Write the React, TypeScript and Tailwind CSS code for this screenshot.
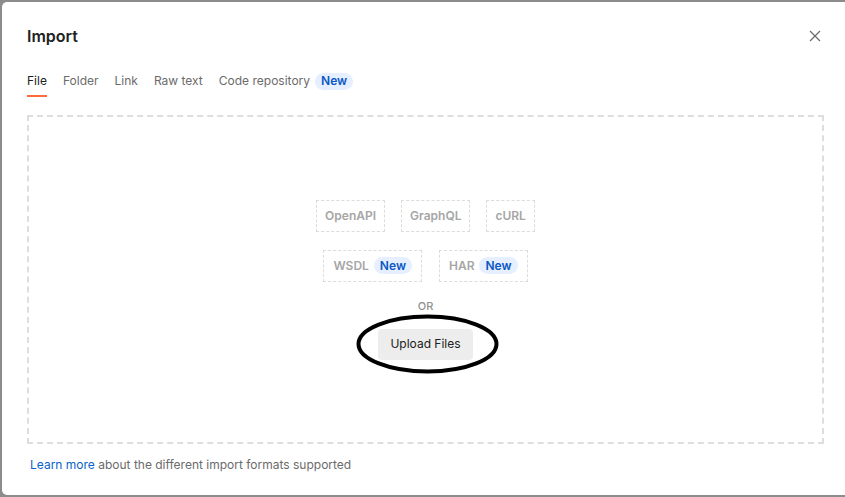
import React from "react";

const font = { fontFamily: "Inter, 'Noto Sans', sans-serif" };

function Badge() {
  return (
    <span className="ml-[5px] inline-flex h-[17px] items-center rounded-full bg-[#e6efff] px-[6px] text-[12px] font-semibold leading-none text-[#0a58c4]">
      New
    </span>
  );
}

function Tile({ label, badge }: { label: string; badge?: boolean }) {
  return (
    <div
      className={
        badge
          ? "flex h-[32px] items-center border border-dashed border-[#dcdcdc] px-[9px] text-[12px] font-semibold text-[#a6a6a6]"
          : "flex h-[32px] items-center border border-dashed border-[#dcdcdc] px-[8px] text-[12px] font-semibold text-[#a6a6a6]"
      }
    >
      {label}
      {badge && <Badge />}
    </div>
  );
}

export default function App() {
  return (
    <div className="h-[497px] w-[845px] overflow-hidden bg-[#8c8c8c]" style={font}>
      <div className="ml-[2px] mt-[2px] flex h-[493px] w-[860px] flex-col rounded-[5px] bg-white pl-[25px] pr-[40px] pt-[22px]">
        <div className="flex h-[24px] w-[796px] items-center justify-between">
          <div className="text-[16px] font-semibold text-[#212121]">Import</div>
          <svg width="12" height="12" viewBox="0 0 12 12" className="mr-[2px]">
            <path d="M1 1 L11 11 M11 1 L1 11" stroke="#6b6b6b" strokeWidth="1.2" />
          </svg>
        </div>
        <div className="mt-[23px] flex items-start gap-[16px] text-[12px] text-[#6b6b6b]">
          <div className="flex flex-col items-start">
            <span className="leading-[20px] text-[#212121]">File</span>
            <span className="mt-[4px] h-[2px] w-[20px] bg-[#ff6c37]" />
          </div>
          <span className="leading-[20px]">Folder</span>
          <span className="leading-[20px]">Link</span>
          <span className="leading-[20px]">Raw text</span>
          <span className="flex items-center leading-[20px]">
            Code repository
            <Badge />
          </span>
        </div>
        <div className="mt-[18px] flex h-[329px] w-[797px] flex-col items-center justify-center border-2 border-dashed border-[#dedede]">
          <div className="flex gap-[16px]">
            <Tile label="OpenAPI" />
            <Tile label="GraphQL" />
            <Tile label="cURL" />
          </div>
          <div className="mt-[18px] flex gap-[17px]">
            <Tile label="WSDL" badge />
            <Tile label="HAR" badge />
          </div>
          <div className="mt-[16px] text-[11px] font-medium leading-[16px] text-[#8f8f8f]">OR</div>
          <div className="relative mt-[15px]">
            <div className="flex h-[31px] items-center rounded-[4px] bg-[#ededed] px-[12px] text-[12px] text-[#212121]">
              Upload Files
            </div>
            <svg
              className="absolute left-[-22px] top-[-15px]"
              width="143"
              height="60"
              viewBox="0 0 143 60"
            >
              <ellipse cx="71.5" cy="30" rx="69" ry="27.5" fill="none" stroke="#000" strokeWidth="4" />
            </svg>
          </div>
        </div>
        <div className="mt-[13px] pl-[3px] text-[12px] leading-[16px] text-[#6b6b6b]">
          <span className="text-[#0a63c9]">Learn more</span> about the different import formats supported
        </div>
      </div>
    </div>
  );
}
